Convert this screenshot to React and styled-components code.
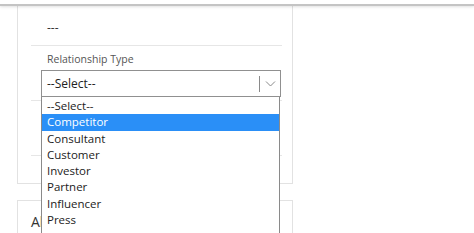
import React from 'react';
import styled, { createGlobalStyle } from 'styled-components';

const GlobalStyle = createGlobalStyle`
  body {
    margin: 0;
    background: #fff;
    font-family: "Open Sans", "Noto Sans", sans-serif;
    color: #222;
  }
`;

const TopBar = styled.div`
  height: 4px;
  border-bottom: 2px solid #c4c4c4;
  box-shadow: 0 1px 3px rgba(0, 0, 0, 0.12);
  position: relative;
  z-index: 2;
`;

const Page = styled.div`
  padding-left: 17px;
  display: flex;
  flex-direction: column;
  gap: 16px;
`;

const Card = styled.div`
  width: 251px;
  border: 1px solid #e2e2e2;
  border-top: ${({ open }) => (open ? 'none' : '1px solid #e2e2e2')};
  padding: 0 10px 0 13px;
`;

const Field = styled.div`
  padding: ${({ pad }) => pad};
  padding-left: 16px;
  height: ${({ h }) => h}px;
  box-sizing: border-box;
  border-bottom: ${({ last }) => (last ? 'none' : '1px solid #e6e6e6')};
`;

const Value = styled.div`
  font-size: 12px;
  line-height: 16px;
  color: #333;
`;

const Label = styled.div`
  font-size: 10.5px;
  line-height: 16px;
  color: #555;
  margin-bottom: 3px;
`;

const SelectWrap = styled.div`
  position: relative;
  margin-left: -6px;
  width: 240px;
`;

const SelectBox = styled.div`
  height: 27px;
  box-sizing: border-box;
  border: 1px solid #909090;
  display: flex;
  align-items: center;
  padding-left: 5px;
  font-size: 12px;
  color: #222;
`;

const SelectText = styled.span`
  flex: 1;
`;

const Divider = styled.span`
  width: 1px;
  height: 16px;
  background: #8a8a8a;
  margin-right: 5px;
`;

const Chevron = styled.svg`
  width: 11px;
  height: 8px;
  margin-right: 4px;
`;

const List = styled.ul`
  position: absolute;
  top: 100%;
  left: 0;
  width: 239px;
  box-sizing: border-box;
  margin: 0;
  padding: 1px 0 24px;
  list-style: none;
  background: #fff;
  border: 1px solid #8a8a8a;
  border-top: none;
  z-index: 1;
`;

const Item = styled.li`
  font-size: 11.5px;
  line-height: 16.3px;
  padding-left: 5px;
  color: ${({ active }) => (active ? '#fff' : '#222')};
  background: ${({ active }) => (active ? '#2a8ff7' : 'transparent')};
`;

const Heading = styled.div`
  height: 40px;
  display: flex;
  align-items: center;
  font-size: 14px;
  color: #333;
`;

const options = [
  '--Select--',
  'Competitor',
  'Consultant',
  'Customer',
  'Investor',
  'Partner',
  'Influencer',
  'Press',
];

export default function App() {
  return (
    <>
      <GlobalStyle />
      <TopBar />
      <Page>
        <Card open>
          <Field h={40} pad="14px 0 0">
            <Value>---</Value>
          </Field>
          <Field h={55} pad="5px 0 0">
            <Label>Relationship Type</Label>
            <SelectWrap>
              <SelectBox>
                <SelectText>--Select--</SelectText>
                <Divider />
                <Chevron viewBox="0 0 11 8">
                  <path d="M1 1.5 L5.5 6 L10 1.5" fill="none" stroke="#8a8a8a" strokeWidth="1" />
                </Chevron>
              </SelectBox>
              <List>
                {options.map((o) => (
                  <Item key={o} active={o === 'Competitor'}>{o}</Item>
                ))}
              </List>
            </SelectWrap>
          </Field>
          <Field h={55} pad="0" />
          <Field h={27} pad="0" last />
        </Card>
        <Card>
          <Heading>Alternate Contacts</Heading>
        </Card>
      </Page>
    </>
  );
}
